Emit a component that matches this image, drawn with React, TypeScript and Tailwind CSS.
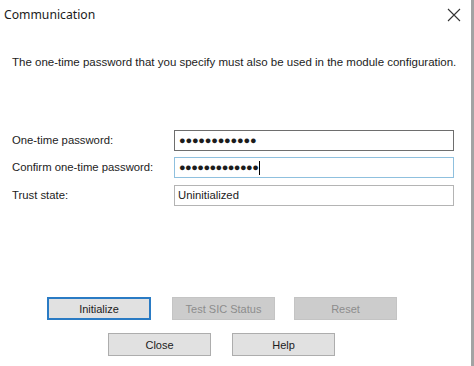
const Field = ({
  label,
  children,
  className,
}: {
  label: string;
  children: React.ReactNode;
  className: string;
}) => (
  <div className={`flex items-center ${className}`}>
    <div className="w-[162px] text-[11.3px] text-[#1c1c1c]">{label}</div>
    {children}
  </div>
);

const Dots = ({ count, tight }: { count: number; tight?: boolean }) => (
  <span
    className={`text-[11px] leading-none text-[#1c1c1c] ${
      tight ? "tracking-[-0.55px]" : "tracking-[-0.2px]"
    }`}
  >
    {"●".repeat(count)}
  </span>
);

const App = () => {
  return (
    <div className="flex h-[366px] w-[474px] bg-white font-['Liberation_Sans',Arial,sans-serif]">
      <div className="flex flex-1 flex-col">
        {/* Title bar */}
        <div className="flex h-[30px] items-center justify-between pl-[4px] pr-[10px]">
          <span className="font-['Noto_Sans',sans-serif] text-[12.2px] text-[#1a1a1a]">
            Communication
          </span>
          <svg width="14" height="14" viewBox="0 0 14 14">
            <path d="M1 1 L13 13 M13 1 L1 13" stroke="#333" strokeWidth="1.1" />
          </svg>
        </div>

        <p className="mt-[24px] pl-[12px] text-[11.5px] text-[#1c1c1c]">
          The one-time password that you specify must also be used in the module configuration.
        </p>

        <div className="mt-[59px] flex flex-col pl-[12px]">
          <Field label="One-time password:" className="">
            <div className="flex h-[21px] w-[280px] items-center border border-[#6e6e6e] pl-[4px]">
              <Dots count={12} />
            </div>
          </Field>
          <Field label="Confirm one-time password:" className="mt-[6px]">
            <div className="flex h-[21px] w-[280px] items-center border border-[#8fc0de] pl-[4px]">
              <Dots count={13} tight />
              <span className="ml-[1px] h-[14px] w-[1px] bg-black" />
            </div>
          </Field>
          <Field label="Trust state:" className="mt-[7px]">
            <div className="flex h-[21px] w-[280px] items-center border border-[#b4b4b4] pl-[3px] text-[11.3px] text-[#1c1c1c]">
              Uninitialized
            </div>
          </Field>
        </div>

        <div className="mt-[91px] flex pl-[47px]">
          <button className="h-[23px] w-[104px] border-2 border-[#2a7bc4] bg-[#e1e1e1] text-[11px] text-[#1c1c1c]">
            Initialize
          </button>
          <button
            disabled
            className="ml-[21px] h-[23px] w-[103px] border border-[#c4c4c4] bg-[#cccccc] text-[11px] text-[#8c8c8c]"
          >
            Test SIC Status
          </button>
          <button
            disabled
            className="ml-[19px] h-[23px] w-[103px] border border-[#c4c4c4] bg-[#cccccc] text-[11px] text-[#8c8c8c]"
          >
            Reset
          </button>
        </div>

        <div className="mt-[13px] flex pl-[108px]">
          <button className="h-[23px] w-[103px] border border-[#adadad] bg-[#e1e1e1] text-[11px] text-[#1c1c1c]">
            Close
          </button>
          <button className="ml-[21px] h-[23px] w-[103px] border border-[#adadad] bg-[#e1e1e1] text-[11px] text-[#1c1c1c]">
            Help
          </button>
        </div>
      </div>
      <div className="w-[3px] bg-[#a3a3a3]" />
    </div>
  );
};

export default App;
